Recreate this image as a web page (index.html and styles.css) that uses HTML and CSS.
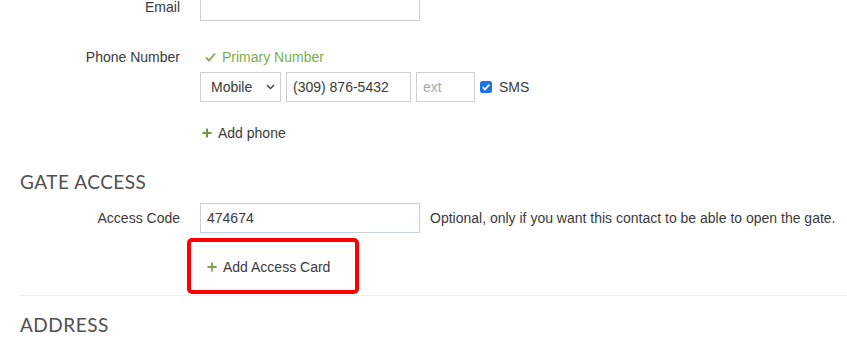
FILE: index.html
```html
<!DOCTYPE html>
<html>
<head>
<meta charset="utf-8">
<link rel="stylesheet" href="styles.css">
</head>
<body>
<div class="page">
  <div class="row row-email">
    <label class="label">Email</label>
    <div class="controls"><div class="input input-wide"></div></div>
  </div>

  <div class="row row-phone">
    <label class="label">Phone Number</label>
    <div class="controls">
      <div class="primary">
        <svg class="check" width="11" height="10" viewBox="0 0 11 10"><path d="M1 5.5 L4 8.5 L10 1.5" fill="none" stroke="#7aae4a" stroke-width="1.8"/></svg>
        <span>Primary Number</span>
      </div>
      <div class="phone-line">
        <div class="input select">Mobile
          <svg class="chev" width="9" height="6" viewBox="0 0 9 6"><path d="M1 1 L4.5 4.5 L8 1" fill="none" stroke="#444" stroke-width="1.5"/></svg>
        </div>
        <div class="input input-phone">(309) 876-5432</div>
        <div class="input input-ext placeholder">ext</div>
        <svg class="checkbox" width="12" height="12" viewBox="0 0 12 12"><rect x="0" y="0" width="12" height="12" rx="2.5" fill="#1a73e8"/><path d="M2.8 6.2 L5 8.4 L9.3 3.6" fill="none" stroke="#fff" stroke-width="1.7"/></svg>
        <span class="sms">SMS</span>
      </div>
      <a class="add-link add-phone">
        <svg class="plus" width="10" height="10" viewBox="0 0 10 10"><path d="M5 0.5 V9.5 M0.5 5 H9.5" stroke="#6c9a3e" stroke-width="2"/></svg>
        <span>Add phone</span>
      </a>
    </div>
  </div>

  <h2 class="section">GATE ACCESS</h2>

  <div class="row row-access">
    <label class="label">Access Code</label>
    <div class="controls inline">
      <div class="input input-wide">474674</div>
      <span class="help">Optional, only if you want this contact to be able to open the gate.</span>
    </div>
  </div>

  <div class="row row-card">
    <span class="label"></span>
    <div class="controls">
      <div class="card-wrap">
        <a class="add-link add-card">
          <svg class="plus" width="10" height="10" viewBox="0 0 10 10"><path d="M5 0.5 V9.5 M0.5 5 H9.5" stroke="#7da052" stroke-width="1.8"/></svg>
          <span>Add Access Card</span>
        </a>
        <div class="highlight"></div>
      </div>
    </div>
  </div>

  <div class="divider"></div>
  <h2 class="section section-address">ADDRESS</h2>
</div>
</body>
</html>
```

FILE: styles.css
```css
html, body {
  margin: 0;
  padding: 0;
  background: #fff;
  overflow: hidden;
}
body {
  font-family: "Liberation Sans", Arial, sans-serif;
  font-size: 14px;
  color: #3a3a3a;
}
.page {
  width: 847px;
  height: 338px;
  overflow: hidden;
}
.row {
  display: grid;
  grid-template-columns: 180px auto;
  column-gap: 20px;
}
.label {
  text-align: right;
  line-height: 20px;
  color: #3a3a3a;
}
.row-email {
  margin-top: -9px;
  align-items: start;
}
.row-email .label {
  margin-top: 10px;
  line-height: 12px;
}
.row-phone {
  margin-top: 26px;
  align-items: start;
}
.row-access {
  margin-top: 9px;
  align-items: center;
}
.controls.inline {
  display: flex;
  align-items: center;
  gap: 10px;
}
.input {
  box-sizing: border-box;
  height: 30px;
  border: 1px solid #d0d0d0;
  background: #fff;
  padding: 0 6px;
  line-height: 28px;
  color: #3a3a3a;
  white-space: nowrap;
}
.input-wide { width: 220px; }
.row-access .input-wide { border-color: #c9d3dd; }
.primary {
  display: flex;
  align-items: center;
  gap: 6px;
  height: 20px;
  padding-left: 5px;
  color: #7aae4a;
}
.phone-line {
  margin-top: 5px;
  display: flex;
  align-items: center;
  gap: 5px;
}
.select {
  width: 81px;
  padding-left: 10px;
  display: flex;
  align-items: center;
  justify-content: space-between;
  padding-right: 5px;
}
.input-phone { width: 125px; padding-left: 6px; }
.input-ext { width: 59px; }
.placeholder { color: #a8a8a8; }
.checkbox {
  display: block;
  flex: none;
}
.sms { margin-left: 2px; }
.add-link {
  display: flex;
  align-items: center;
  gap: 6px;
  height: 20px;
  color: #3a3a3a;
  text-decoration: none;
}
.add-phone {
  margin-top: 21px;
  padding-left: 2px;
}
.section {
  margin: 27px 0 0 20px;
  font-family: Lato, "Open Sans", sans-serif;
  font-weight: 400;
  font-size: 19px;
  letter-spacing: 0.5px;
  line-height: 24px;
  color: #505050;
}
.row-card {
  margin-top: 5px;
}
.card-wrap {
  position: relative;
  height: 57px;
  display: flex;
  align-items: center;
}
.add-card {
  padding-left: 7px;
}
.highlight {
  position: absolute;
  left: -13px;
  top: 0;
  width: 172px;
  height: 56px;
  box-sizing: border-box;
  border: 4px solid #ff0000;
  border-radius: 5px;
}
.divider {
  margin-left: 20px;
  height: 1px;
  background: #efefef;
}
.section-address {
  margin-top: 17px;
}
```
